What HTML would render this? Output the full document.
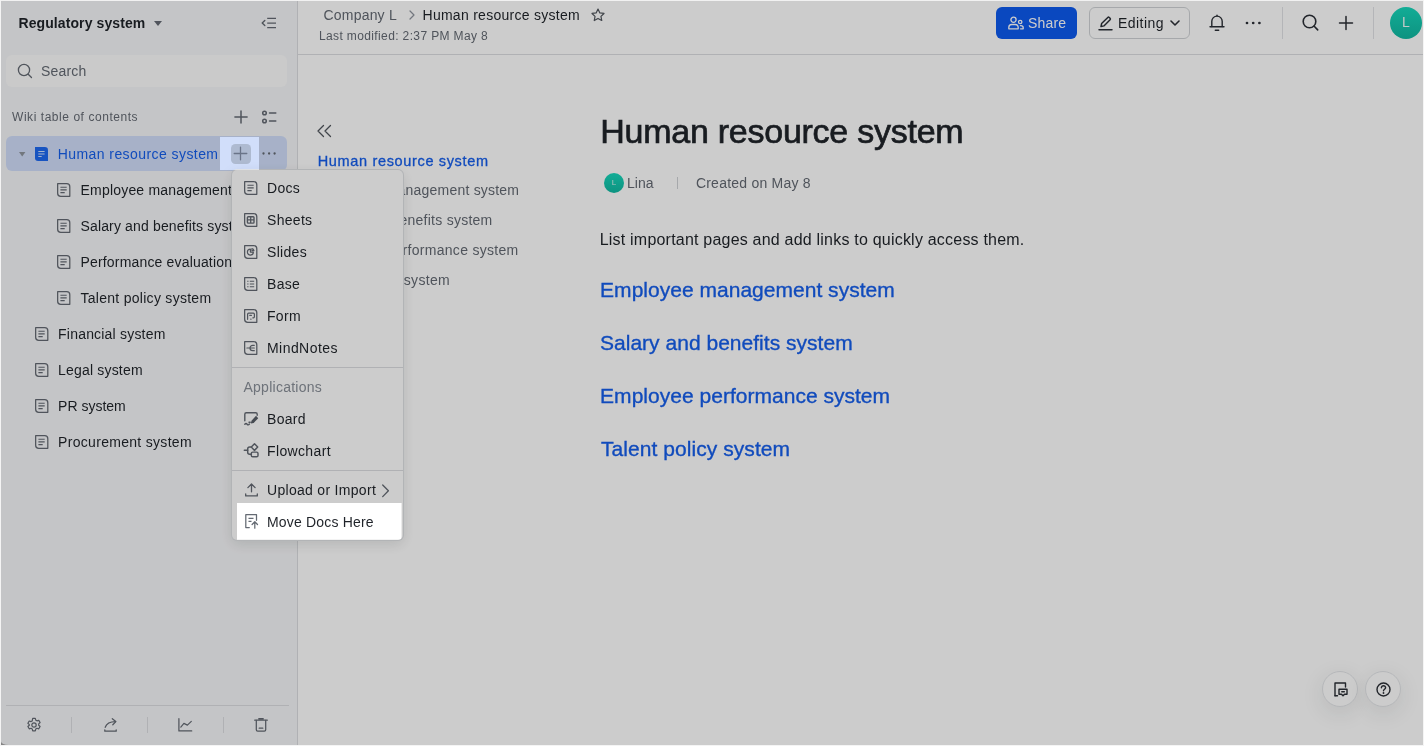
<!DOCTYPE html>
<html lang="en">
<head>
<meta charset="utf-8">
<title>Human resource system</title>
<style>
*{box-sizing:border-box;margin:0;padding:0}
html,body{width:1424px;height:746px;overflow:hidden;background:#fff}
body{font-family:"Liberation Sans",sans-serif;color:#1f2329;position:relative}
#app{position:absolute;left:0;top:0;width:1424px;height:746px;overflow:hidden;background:transparent;will-change:transform}
.abs{position:absolute}
.t{position:absolute;white-space:nowrap;line-height:20px;height:20px}
svg{position:absolute;overflow:visible}
.ic{fill:none;stroke:#646a73;stroke-width:1.3;stroke-linecap:round;stroke-linejoin:round}
.icd{fill:none;stroke:#2b2f36;stroke-width:1.5;stroke-linecap:round;stroke-linejoin:round}
/* sidebar */
#side{position:absolute;left:0;top:0;width:298px;height:746px;background:#f6f7f9;border-right:1px solid #dcdee1}
#search{position:absolute;left:6px;top:55px;width:281px;height:32px;border-radius:6px;background:#fdfdfd}
.row{position:absolute;left:6px;width:281px;height:34px;border-radius:6px}
.row.sel{background:#d1defa}
.row .t{top:8px;font-size:14px;letter-spacing:.33px}
/* header */
#hdr{position:absolute;left:298px;top:0;width:1126px;height:55px;border-bottom:1px solid #dcdee1;background:#fff}
/* popup */
#menu{position:absolute;left:232px;top:170px;width:170.500px;height:369.500px;background:#fff;border-radius:5px;box-shadow:0 0 0 1px #dfe1e4,0 4px 14px rgba(31,35,41,.13)}
#menu .in{position:absolute;left:1px;top:1px}
#menu .t{left:34px;font-size:14px;letter-spacing:.3px}
#menu .sep{position:absolute;left:-1px;width:170.500px;height:1px;background:#dcdee1}
.toc{font-size:14px;color:#646a73;letter-spacing:.42px}
.lk{font-size:21px;line-height:28px;height:28px;color:#155eec;letter-spacing:.02px;-webkit-text-stroke:.35px #155eec}
.fab{position:absolute;width:36px;height:36px;border-radius:18px;background:#fff;border:1px solid #e3e5e8;box-shadow:0 6px 22px rgba(31,35,41,.1)}
</style>
</head>
<body>
<div id="app">

<!-- ============ SIDEBAR ============ -->
<div id="side">
  <div class="t" style="left:18.500px;top:13px;font-size:14px;font-weight:bold;letter-spacing:.09px">Regulatory system</div>
  <svg style="left:153px;top:20px" width="10" height="7" viewBox="0 0 10 7"><path d="M1 1h8L5 6z" fill="#646a73"/></svg>
  <svg style="left:261px;top:17px" width="16" height="12" viewBox="0 0 16 12"><path class="ic" style="stroke-linecap:butt;stroke-width:1.250" d="M6.200 1.300h8.800M6.200 6h8.800M6.200 10.600h8.800"/><path class="ic" style="stroke-width:1.400" d="M3.800 3.500L1.200 6l2.600 2.500"/></svg>

  <div id="search">
    <svg style="left:11px;top:8px" width="16" height="16" viewBox="0 0 16 16"><circle class="ic" cx="7" cy="7" r="5.600"/><path class="ic" d="M11.200 11.200L14.500 14.500"/></svg>
    <div class="t" style="left:35px;top:6px;font-size:14px;color:#646a73;letter-spacing:.2px">Search</div>
  </div>

  <div class="t" style="left:12px;top:107px;font-size:12px;color:#646a73;letter-spacing:.55px">Wiki table of contents</div>
  <svg style="left:234px;top:110px" width="14" height="14" viewBox="0 0 14 14"><path class="icd" style="stroke:#646a73;stroke-width:1.500" d="M7 .9v12.200M.9 7h12.200"/></svg>
  <svg style="left:261.700px;top:110px" width="15" height="14" viewBox="0 0 15 14"><g class="icd" style="stroke:#646a73;stroke-width:1.500"><circle cx="2.500" cy="3" r="1.800"/><circle cx="2.500" cy="11" r="1.800"/><path d="M7.500 3h6.300M7.500 11h6.300"/></g></svg>

  <!-- selected row -->
  <div class="row sel" style="top:136px;height:34.500px">
    <svg style="left:12.800px;top:16px" width="7" height="5" viewBox="0 0 7 5"><path d="M0 0h6.400L3.200 4.600z" fill="#8f959e"/></svg>
    <svg style="left:29.200px;top:11px" width="14" height="14" viewBox="0 0 14 14"><path d="M0 0H9.800a3.200 3.200 0 013.200 3.200V14H3a3 3 0 01-3-3z" fill="#1f69f2"/><path d="M3.300 4.500h6.300M3.300 7h6.300M3.300 9.500h3.400" stroke="#cfe0ff" stroke-width="1" fill="none"/></svg>
    <div class="t" style="left:51.700px;color:#155eec;letter-spacing:.43px">Human resource system</div>
    <div class="abs" style="left:225px;top:8px;width:20px;height:20px;border-radius:4.500px;background:#aebad0"></div>
    <svg style="left:228px;top:11.200px" width="13" height="13" viewBox="0 0 13 13"><path d="M6.500 .2v12.600M.2 6.500h12.600" stroke="#6a7488" stroke-width="1.300" stroke-linecap="round" fill="none"/></svg>
    <svg style="left:255.900px;top:16.300px" width="14" height="3" viewBox="0 0 14 3"><circle cx="1.500" cy="1.500" r="1.150" fill="#646a73"/><circle cx="7.100" cy="1.500" r="1.150" fill="#646a73"/><circle cx="12.600" cy="1.500" r="1.150" fill="#646a73"/></svg>
  </div>

  <!-- children -->
  <div class="row" style="top:172px"><svg style="left:51.1px;top:11px" width="14" height="14" viewBox="0 0 14 14"><use href="#doc"/></svg><div class="t" style="left:74.500px;letter-spacing:.2px">Employee management</div></div>
  <div class="row" style="top:208px"><svg style="left:51.1px;top:11px" width="14" height="14" viewBox="0 0 14 14"><use href="#doc"/></svg><div class="t" style="left:74.500px;letter-spacing:.15px">Salary and benefits system</div></div>
  <div class="row" style="top:244px"><svg style="left:51.1px;top:11px" width="14" height="14" viewBox="0 0 14 14"><use href="#doc"/></svg><div class="t" style="left:74.500px;letter-spacing:.17px">Performance evaluation</div></div>
  <div class="row" style="top:280px"><svg style="left:51.1px;top:11px" width="14" height="14" viewBox="0 0 14 14"><use href="#doc"/></svg><div class="t" style="left:74.500px;letter-spacing:.28px">Talent policy system</div></div>
  <div class="row" style="top:316px"><svg style="left:29.2px;top:11px" width="14" height="14" viewBox="0 0 14 14"><use href="#doc"/></svg><div class="t" style="left:52.100px;letter-spacing:.2px">Financial system</div></div>
  <div class="row" style="top:352px"><svg style="left:29.2px;top:11px" width="14" height="14" viewBox="0 0 14 14"><use href="#doc"/></svg><div class="t" style="left:52.100px;letter-spacing:.18px">Legal system</div></div>
  <div class="row" style="top:388px"><svg style="left:29.2px;top:11px" width="14" height="14" viewBox="0 0 14 14"><use href="#doc"/></svg><div class="t" style="left:52.100px;letter-spacing:0">PR system</div></div>
  <div class="row" style="top:424px"><svg style="left:29.2px;top:11px" width="14" height="14" viewBox="0 0 14 14"><use href="#doc"/></svg><div class="t" style="left:52.100px;letter-spacing:.3px">Procurement system</div></div>

  <svg style="left:26px;top:717px" width="16" height="16" viewBox="0 0 16 16"><g class="ic" style="stroke-width:1.200"><path d="M6.700 1.300h2.600l.5 1.900 1.100.65 1.900-.55 1.300 2.250-1.400 1.350v1.300l1.400 1.350-1.300 2.250-1.900-.55-1.100.65-.5 1.900H6.700l-.5-1.900-1.100-.65-1.900.55-1.300-2.250 1.400-1.350V7.600L1.900 6.250 3.200 4l1.900.55 1.100-.65z"/><circle cx="8" cy="8" r="2.200"/></g></svg>
  <svg style="left:104px;top:718px" width="13" height="14" viewBox="0 0 13 14"><g class="ic" style="stroke-width:1.250"><path d="M.8 11.800v1.400h11.400v-1.400"/><path d="M1.200 9.300C2.300 6 5.500 3.600 11.600 3.600"/><path d="M8.300.7l3.500 2.900-3 3.200"/></g></svg>
  <svg style="left:178px;top:718px" width="15" height="14" viewBox="0 0 15 14"><g class="ic" style="stroke-width:1.250"><path d="M.9.700v12.200h12.800"/><path d="M2.800 9.100l3.100-3.700 3.500 1.700 3.900-3.700" style="stroke-width:1.200"/></g></svg>
  <svg style="left:254px;top:718px" width="14" height="14" viewBox="0 0 14 14"><g class="ic" style="stroke-width:1.250"><path d="M.7 2.200h12.600"/><path d="M4.900.9h4.200" style="stroke-width:1.600"/><path d="M2.300 2.300v9.500c0 .8.600 1.400 1.400 1.400h6.600c.8 0 1.400-.6 1.400-1.400V2.300"/><path d="M5.200 10.200h3.600"/></g></svg>
  <!-- bottom bar -->
  <div class="abs" style="left:6px;top:705px;width:283px;height:1px;background:#dcdee1"></div>
  <div class="abs" style="left:71px;top:717px;width:1px;height:16px;background:#dcdee1"></div>
  <div class="abs" style="left:147px;top:717px;width:1px;height:16px;background:#dcdee1"></div>
  <div class="abs" style="left:223px;top:717px;width:1px;height:16px;background:#dcdee1"></div>
</div>

<!-- ============ HEADER ============ -->
<div id="hdr">
  <div class="t" style="left:25.500px;top:5px;font-size:14px;color:#646a73;letter-spacing:.2px">Company L</div>
  <svg style="left:111px;top:10px" width="6" height="10" viewBox="0 0 6 10"><path class="ic" style="stroke:#8f959e;stroke-width:1.200" d="M1 1l4 4-4 4"/></svg>
  <div class="t" style="left:124.500px;top:5px;font-size:14px;color:#1f2329;letter-spacing:.27px">Human resource system</div>
  <svg style="left:293px;top:8px" width="14" height="14" viewBox="0 0 14 14"><path class="ic" style="stroke:#51565d;stroke-width:1.200" d="M7 1l1.850 3.900 4.150.55-3.050 2.900.8 4.150L7 10.450 3.250 12.500l.8-4.150L1 5.450l4.150-.55z"/></svg>
  <div class="t" style="left:21px;top:26px;font-size:12px;color:#646a73;letter-spacing:.37px">Last modified: 2:37 PM May 8</div>

  <!-- Share -->
  <div class="abs" style="left:698px;top:7px;width:81px;height:32px;border-radius:6px;background:#0d5aef"></div>
  <svg style="left:710px;top:16px" width="16" height="14" viewBox="0 0 16 14"><g fill="none" stroke="#fff" stroke-width="1.300" stroke-linecap="round" stroke-linejoin="round"><circle cx="5.500" cy="3.800" r="2.600"/><path d="M.8 12.800v-1.300c0-1.700 1.400-3 3-3h3.400c1.700 0 3 1.400 3 3v1.300z"/><circle cx="12.200" cy="6" r="1.700"/><path d="M12.500 12.800h2.700v-1c0-1.300-1-2.200-2.200-2.200h-.6"/></g></svg>
  <div class="t" style="left:730px;top:13px;font-size:14px;color:#fff;letter-spacing:.2px">Share</div>
  <!-- Editing -->
  <div class="abs" style="left:791px;top:7px;width:101px;height:32px;border-radius:6px;border:1px solid #d0d3d6;background:#fff"></div>
  <svg style="left:800px;top:15px" width="15" height="16" viewBox="0 0 15 16"><g class="icd" style="stroke-width:1.450"><path d="M1 14.800h13"/><path d="M3 11.500l.6-2.900 6.200-6.200a1 1 0 011.400 0l.9.900a1 1 0 010 1.400L5.900 10.900z"/></g></svg>
  <div class="t" style="left:820px;top:13px;font-size:14px;color:#1f2329;letter-spacing:.45px">Editing</div>
  <svg style="left:872px;top:20px" width="10" height="6" viewBox="0 0 10 6"><path class="icd" style="stroke-width:1.600" d="M1 1l4 4 4-4"/></svg>
  <!-- bell -->
  <svg style="left:911px;top:14px" width="16" height="18" viewBox="0 0 16 18"><g class="icd" style="stroke-width:1.400"><path d="M2.800 12.500V7.300a5.200 5.200 0 0110.400 0v5.200"/><path d="M8 1.900V1.200"/><path d="M1 12.800h14"/><path d="M6.300 16.200h3.400"/></g></svg>
  <svg style="left:947px;top:20.700px" width="16" height="4" viewBox="0 0 16 4"><circle cx="2" cy="2" r="1.350" fill="#2b2f36"/><circle cx="8.200" cy="2" r="1.350" fill="#2b2f36"/><circle cx="14.400" cy="2" r="1.350" fill="#2b2f36"/></svg>
  <div class="abs" style="left:984px;top:7px;width:1px;height:32px;background:#e1e3e6"></div>
  <svg style="left:1003.700px;top:14.100px" width="17" height="17" viewBox="0 0 17 17"><circle class="icd" style="stroke-width:1.600" cx="7.500" cy="7.500" r="6.300"/><path class="icd" style="stroke-width:1.600" d="M12.200 12.200l3.500 3.700"/></svg>
  <svg style="left:1041px;top:16px" width="14" height="14" viewBox="0 0 14 14"><path class="icd" d="M7 .5v13M.5 7h13"/></svg>
  <div class="abs" style="left:1075px;top:7px;width:1px;height:32px;background:#e1e3e6"></div>
  <div class="abs" style="left:1092px;top:7px;width:32px;height:32px;border-radius:16px;background:linear-gradient(180deg,#17d8bc,#11b8a1)"></div>
  <div class="t" style="left:1103px;top:12px;font-size:14px;color:#f2fbf9;width:10px;text-align:center">L</div>
</div>

<!-- ============ MAIN ============ -->
<div id="main">
  <svg style="left:317px;top:125px" width="14" height="12" viewBox="0 0 14 12"><path class="ic" style="stroke:#51565d;stroke-width:1.300" d="M6.500.500L1 6l5.500 5.500M13.500.500L8 6l5.500 5.500"/></svg>
  <div class="t" style="left:317.700px;top:150.700px;font-size:14.500px;color:#155eec;letter-spacing:.66px;-webkit-text-stroke:.3px #155eec">Human resource system</div>
  <div class="t toc" style="left:317.700px;top:179.700px;letter-spacing:.21px">Employee management system</div>
  <div class="t toc" style="left:317.700px;top:209.700px;letter-spacing:.26px">Salary and benefits system</div>
  <div class="t toc" style="left:317.700px;top:239.700px;letter-spacing:.29px">Employee performance system</div>
  <div class="t toc" style="left:318.500px;top:269.700px;letter-spacing:.31px">Talent policy system</div>

  <div class="t" style="left:600.200px;top:110.400px;font-size:34px;line-height:42px;height:42px;color:#1f2329;letter-spacing:-.25px;-webkit-text-stroke:.7px #1f2329">Human resource system</div>
  <div class="abs" style="left:604px;top:173px;width:20px;height:20px;border-radius:10px;background:linear-gradient(180deg,#17d8bc,#11b8a1)"></div>
  <div class="t" style="left:610px;top:173px;font-size:8px;color:#d8f3ee;width:8px;text-align:center">L</div>
  <div class="t" style="left:627px;top:173px;font-size:14px;color:#646a73;letter-spacing:0">Lina</div>
  <div class="abs" style="left:677px;top:177px;width:1px;height:12px;background:#d0d3d6"></div>
  <div class="t" style="left:695.900px;top:173px;font-size:14px;color:#646a73;letter-spacing:.23px">Created on May 8</div>
  <div class="t" style="left:599.700px;top:227.500px;font-size:16px;line-height:24px;height:24px;color:#1f2329;letter-spacing:.21px">List important pages and add links to quickly access them.</div>
  <div class="t lk" style="left:600.100px;top:275.500px">Employee management system</div>
  <div class="t lk" style="left:600px;top:328.600px">Salary and benefits system</div>
  <div class="t lk" style="left:600.100px;top:381.700px">Employee performance system</div>
  <div class="t lk" style="left:601px;top:434.700px;letter-spacing:.06px">Talent policy system</div>

  <div class="fab" style="left:1322px;top:671px"></div>
  <div class="fab" style="left:1365px;top:671px"></div>
  <svg style="left:1334px;top:682px" width="14" height="15" viewBox="0 0 14 15"><g class="icd" style="stroke-width:1.400"><path d="M1 13.800V1h10.500v4"/><path d="M1 13.800h2.500"/><path d="M5 7.200h8v5H10.500L9 13.800 7.500 12.200H5z"/><path d="M7.800 9.700h2.500"/></g></svg>
  <svg style="left:1376px;top:682px" width="15" height="15" viewBox="0 0 15 15"><circle class="icd" style="stroke-width:1.400" cx="7.500" cy="7.500" r="6.500"/><path class="icd" style="stroke-width:1.400" d="M5.400 5.800a2.100 2.100 0 114.200 0c0 1.300-2.100 1.500-2.100 2.900"/><circle cx="7.500" cy="11" r=".9" fill="#2b2f36"/></svg>
</div>

<!-- ============ POPUP MENU ============ -->
<div id="menu"><div class="in">
  <svg style="left:11.200px;top:9.8px" width="14" height="14" viewBox="0 0 14 14"><use href="#doc"/></svg><div class="t" style="top:7px">Docs</div>
  <svg style="left:11.200px;top:41.8px" width="14" height="14" viewBox="0 0 14 14"><path class="ic" style="stroke-width:1.250" d="M.65.650H9.700a3.100 3.100 0 013.100 3.100V13.350H3.750a3.100 3.100 0 01-3.100-3.100z"/><rect x="3.400" y="3.700" width="6.600" height="6.400" rx=".8" class="ic" style="stroke-width:1.400"/><path class="ic" style="stroke-width:1.300;stroke-linecap:butt" d="M6.700 3.700v6.400M3.400 6.900h6.600"/></svg><div class="t" style="top:39px">Sheets</div>
  <svg style="left:11.200px;top:73.8px" width="14" height="14" viewBox="0 0 14 14"><path class="ic" style="stroke-width:1.250" d="M.65.650H9.700a3.100 3.100 0 013.100 3.100V13.350H3.750a3.100 3.100 0 01-3.100-3.100z"/><path class="ic" style="stroke-width:1.200" d="M6.400 4.100a3 3 0 103 3H6.400z"/><path class="ic" style="stroke-width:1.100" d="M7.900 3.500a2.600 2.600 0 012.100 2.100H7.900z"/></svg><div class="t" style="top:71px">Slides</div>
  <svg style="left:11.200px;top:105.8px" width="14" height="14" viewBox="0 0 14 14"><path class="ic" style="stroke-width:1.250" d="M.65.650H9.700a3.100 3.100 0 013.100 3.100V13.350H3.750a3.100 3.100 0 01-3.100-3.100z"/><path class="ic" style="stroke-width:1.100;stroke-linecap:butt" d="M5.800 4.300h4.400M5.800 7h4.400M5.800 9.700h4.400M3.200 4.300h1.300M3.200 7h1.300M3.200 9.700h1.300"/></svg><div class="t" style="top:103px">Base</div>
  <svg style="left:11.200px;top:137.8px" width="14" height="14" viewBox="0 0 14 14"><path class="ic" style="stroke-width:1.250" d="M.65.650H9.700a3.100 3.100 0 013.100 3.100V13.350H3.750a3.100 3.100 0 01-3.100-3.100z"/><path class="ic" style="stroke-width:1.200" d="M3.600 10.300V5.200c0-.6.400-1 1-1h4.800c.6 0 1 .4 1 1v2.600c0 .6-.4 1-1 1H8.800"/><path class="ic" style="stroke-width:1.200" d="M5.800 6.400h1.600M6.800 10.200h.2"/></svg><div class="t" style="top:135px">Form</div>
  <svg style="left:11.200px;top:169.8px" width="14" height="14" viewBox="0 0 14 14"><path class="ic" style="stroke-width:1.250" d="M.65.650H9.700a3.100 3.100 0 013.100 3.100V13.350H3.750a3.100 3.100 0 01-3.100-3.100z"/><path class="ic" style="stroke-width:1.200" d="M2.900 7h2.600M10.300 4.300H8.700c-1.500 0-2.700 1.200-2.700 2.700s1.200 2.700 2.700 2.700h1.600M6 7h4.300"/></svg><div class="t" style="top:167px;letter-spacing:.44px">MindNotes</div>
  <div class="sep" style="top:196px"></div>
  <div class="t" style="left:10.500px;top:206px;color:#8a9099;letter-spacing:.25px">Applications</div>
  <svg style="left:11px;top:241px" width="15" height="14" viewBox="0 0 15 14"><g class="ic" style="stroke-width:1.400"><path d="M.8 8.800V2.300C.8 1.500 1.400.8 2.300.8h9.400c.8 0 1.500.7 1.500 1.500v1"/><path d="M.8 12.300c.9-1 1.600-1 2.300-.1.700.9 1.500.9 2.300-.2"/><path d="M5 10.300h1.200"/></g><path d="M12.200 4.100l1.800 1.800c.2.200.2.500 0 .7L9.700 10.900l-2.900.7.700-2.900 4.100-4.500c.2-.2.400-.2.600-.1z" fill="#585e67"/></svg><div class="t" style="top:238px">Board</div>
  <svg style="left:11px;top:272.200px" width="15" height="15" viewBox="0 0 15 15"><g class="ic" style="stroke-width:1.450"><path d="M.3 7.300h3.400"/><path d="M7 3.900H5.700c-1.100 0-2 .9-2 2v3.400c0 1.100.9 2 2 2h1.400"/><path d="M10.500.800l3.200 3.300-3.200 3.300-3.200-3.300z"/><rect x="7.300" y="9.100" width="6.700" height="4.700" rx="1.400"/></g></svg><div class="t" style="top:269.800px;letter-spacing:.36px">Flowchart</div>
  <div class="sep" style="top:299px"></div>
  <svg style="left:12px;top:312.300px" width="13" height="14" viewBox="0 0 13 14"><g class="ic" style="stroke-width:1.300"><path d="M6.500 8.800V1M2.900 4.600L6.500 1l3.600 3.600"/><path d="M.7 11v1.900h11.600V11"/></g></svg><div class="t" style="top:308.700px;letter-spacing:.3px">Upload or Import</div>
  <svg style="left:148.500px;top:313px" width="8" height="14" viewBox="0 0 8 14"><path class="ic" style="stroke-width:1.300" d="M.7 1l5.700 5.800-5.700 5.800"/></svg>
  <svg style="left:12px;top:343.300px" width="14" height="15" viewBox="0 0 14 15"><g class="ic" style="stroke-width:1.250"><path d="M4.300 13.600H.8V.7h10.700v5.600"/><path d="M3.500 4.400h5M3.500 7.400h3" style="stroke-linecap:butt"/><path d="M9.800 14.200V7.800M7.100 10.500l2.700-2.800 2.700 2.800"/></g></svg><div class="t" style="top:340.700px;letter-spacing:.18px">Move Docs Here</div>
</div></div>

<svg width="0" height="0" style="left:0;top:0"><defs>
<g id="doc"><path class="ic" style="stroke-width:1.250" d="M.65.650H9.700a3.100 3.100 0 013.100 3.100V13.350H3.750a3.100 3.100 0 01-3.100-3.100z"/><path class="ic" style="stroke-width:1.100;stroke-linecap:butt" d="M3.400 4.200h6.300M3.400 6.900h6.300M3.400 9.600h4.300"/></g>
</defs></svg>

<!-- dim overlay with holes -->
<svg id="dim" style="left:0;top:0;pointer-events:none" width="1424" height="746" viewBox="0 0 1424 746"><path fill="rgba(0,0,0,.2)" fill-rule="evenodd" d="M0 0H1424V746H0Z M220 137h39v33h-39z M237 503H401.600V536.700a3 3 0 01-3 3H237z"/></svg>
<!-- white frame -->
<svg style="left:0;top:736px" width="12" height="10" viewBox="0 0 12 10"><path d="M1 5.500Q1.600 8.600 9 9H1z" fill="#858585"/></svg>
<div class="abs" style="left:0;top:0;width:1424px;height:1px;background:#f1f1f1"></div>
<div class="abs" style="left:0;top:0;width:1px;height:746px;background:#f4f4f4"></div>
<div class="abs" style="left:1423px;top:0;width:1px;height:746px;background:#f4f4f4"></div>
<div class="abs" style="left:0;top:745px;width:1424px;height:1px;background:#f4f4f4"></div>
</div>
</body>
</html>
